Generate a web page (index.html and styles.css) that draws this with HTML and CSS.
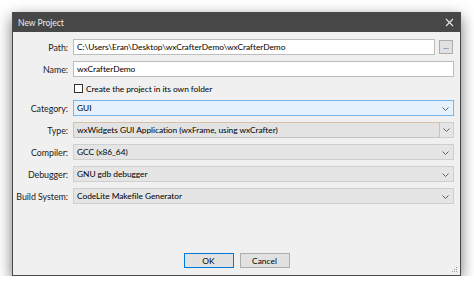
FILE: index.html
```html
<!DOCTYPE html>
<html lang="en">
<head>
  <meta charset="UTF-8" />
  <title>New Project</title>
  <link rel="stylesheet" href="styles.css">
</head>
<body>
  <div class="ventana">
    <div class="titulo">
      <span>New Project</span>
      <svg class="cerrar" width="9" height="9" viewBox="0 0 9 9"><path d="M1 1 L8 8 M8 1 L1 8" stroke="#e8e8e8" stroke-width="1.1"/></svg>
    </div>
    <div class="cuerpo">
      <div class="formulario">
        <label>Path:</label>
        <div class="fila">
          <div class="campo texto">C:\Users\Eran\Desktop\wxCrafterDemo\wxCrafterDemo</div>
          <div class="puntos">...</div>
        </div>

        <label>Name:</label>
        <div class="campo texto">wxCrafterDemo</div>

        <span></span>
        <div class="check"><span class="caja"></span>Create the project in its own folder</div>

        <label>Category:</label>
        <div class="campo combo activo">GUI<svg class="flecha" width="7" height="4" viewBox="0 0 7 4"><path d="M0.5 0.5 L3.5 3.5 L6.5 0.5" fill="none" stroke="#606060"/></svg></div>

        <label>Type:</label>
        <div class="fila pegada">
          <div class="campo tipo">wxWidgets GUI Application (wxFrame, using wxCrafter)</div>
          <div class="boton-combo"><svg width="7" height="4" viewBox="0 0 7 4"><path d="M0.5 0.5 L3.5 3.5 L6.5 0.5" fill="none" stroke="#606060"/></svg></div>
        </div>

        <label>Compiler:</label>
        <div class="campo combo">GCC (x86_64)<svg class="flecha" width="7" height="4" viewBox="0 0 7 4"><path d="M0.5 0.5 L3.5 3.5 L6.5 0.5" fill="none" stroke="#606060"/></svg></div>

        <label>Debugger:</label>
        <div class="campo combo">GNU gdb debugger<svg class="flecha" width="7" height="4" viewBox="0 0 7 4"><path d="M0.5 0.5 L3.5 3.5 L6.5 0.5" fill="none" stroke="#606060"/></svg></div>

        <label>Build System:</label>
        <div class="campo combo">CodeLite Makefile Generator<svg class="flecha" width="7" height="4" viewBox="0 0 7 4"><path d="M0.5 0.5 L3.5 3.5 L6.5 0.5" fill="none" stroke="#606060"/></svg></div>
      </div>

      <div class="botones">
        <button class="ok">OK</button>
        <button>Cancel</button>
      </div>
      <svg class="agarre" width="6" height="6" viewBox="0 0 6 6"><g fill="#a0a0a0"><rect x="4" y="0" width="1" height="1"/><rect x="2" y="2" width="1" height="1"/><rect x="4" y="2" width="1" height="1"/><rect x="0" y="4" width="1" height="1"/><rect x="2" y="4" width="1" height="1"/><rect x="4" y="4" width="1" height="1"/></g></svg>
    </div>
  </div>
</body>
</html>
```

FILE: styles.css
```css
body {
  margin: 0;
  background: #fff;
  font-family: Lato, "Open Sans", sans-serif;
  font-size: 8.4px;
  letter-spacing: -0.05px;
  color: #000;
}
.ventana {
  margin: 12px 0 0 12px;
  width: 449px;
  height: 264px;
  box-sizing: border-box;
  border: 1px solid #4a4a4a;
  background: #f0f0f0;
  display: flex;
  flex-direction: column;
  box-shadow: 0 5px 14px rgba(0,0,0,0.55);
}
.titulo {
  height: 19px;
  background: #474747;
  color: #ececec;
  display: flex;
  align-items: center;
  justify-content: space-between;
  padding: 0 6px 0 5px;
  font-size: 8.6px;
}
.cuerpo {
  flex: 1;
  display: flex;
  flex-direction: column;
  position: relative;
}
.formulario {
  display: grid;
  grid-template-columns: 55px 1fr;
  column-gap: 5px;
  row-gap: 6px;
  align-items: center;
  padding: 7px 6px 0 0;
}
label {
  text-align: right;
  white-space: nowrap;
  color: #1a1a1a;
  font-size: 8.9px;
}
.fila {
  display: flex;
  align-items: center;
  gap: 4px;
}
.pegada { gap: 0; }
.campo {
  height: 16px;
  box-sizing: border-box;
  border: 1px solid #c8c8c8;
  padding: 0 3px;
  line-height: 14px;
  white-space: nowrap;
  overflow: hidden;
  position: relative;
}
.fila .campo { flex: 1; }
.texto { background: #fff; border-color: #bcbcbc; }
.puntos {
  width: 14px;
  height: 14px;
  box-sizing: border-box;
  border: 1px solid #adadad;
  background: #e1e1e1;
  font-size: 8px;
  line-height: 10px;
  text-align: center;
  color: #555;
  margin-right: 1px;
}
.check {
  display: flex;
  align-items: center;
  gap: 3px;
  height: 11px;
  padding-left: 1px;
}
.caja {
  width: 9px;
  height: 9px;
  box-sizing: border-box;
  border: 1px solid #333;
  background: #fff;
}
.combo { background: #e5e5e5; border-color: #cfcfcf; }
.activo { background: #e5f1fb; border-color: #7eb4ea; }
.flecha {
  position: absolute;
  right: 4px;
  top: 6px;
}
.tipo {
  background: #e3e3e3;
  border-color: #c4c4c4;
  border-top-color: #d8bfa8;
}
.boton-combo {
  width: 14px;
  height: 16px;
  box-sizing: border-box;
  border: 1px solid #d0d0d0;
  border-left: none;
  background: #e5e5e5;
  display: flex;
  align-items: center;
  justify-content: center;
}
.botones {
  margin-top: auto;
  display: flex;
  justify-content: center;
  gap: 6px;
  padding-bottom: 7px;
}
button {
  width: 50px;
  height: 15px;
  box-sizing: border-box;
  border: 1px solid #adadad;
  background: #e1e1e1;
  font-family: inherit;
  font-size: 8.4px;
  line-height: 12px;
  padding: 0;
  color: #000;
}
.ok { border-color: #0078d7; }
.agarre {
  position: absolute;
  right: 2px;
  bottom: 2px;
}
```
